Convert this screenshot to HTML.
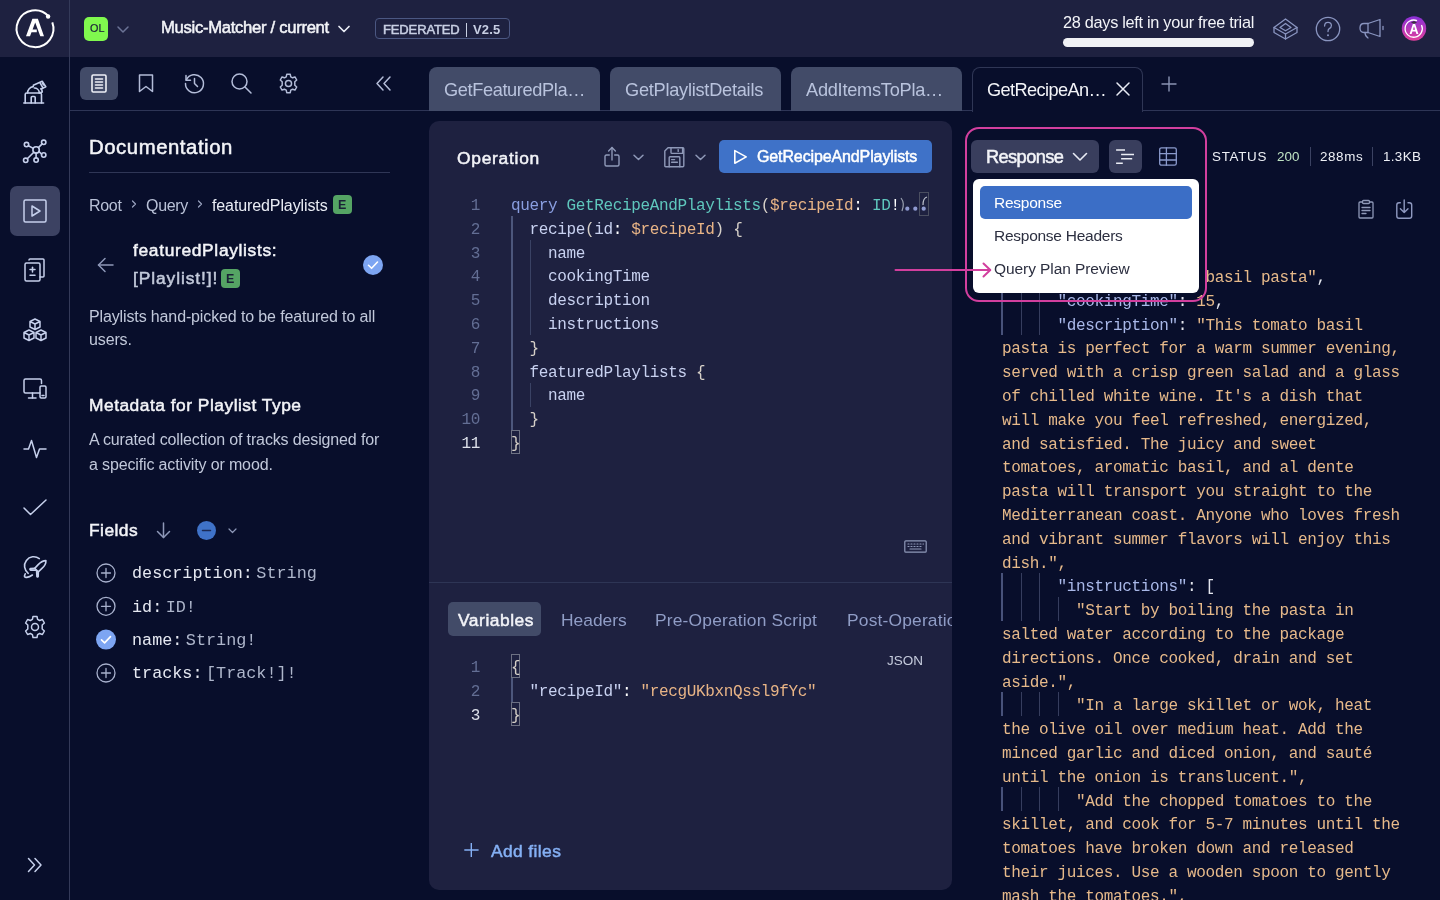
<!DOCTYPE html>
<html><head><meta charset="utf-8"><title>Explorer</title>
<style>
*{box-sizing:border-box;margin:0;padding:0}
html,body{width:1440px;height:900px;overflow:hidden;background:#080e2b;font-family:"Liberation Sans",sans-serif;color:#e8ebf4}
.a{position:absolute}
.t{position:absolute;white-space:nowrap;line-height:1;will-change:transform}
.m{position:absolute;white-space:pre;line-height:1;font-family:"Liberation Mono",monospace;will-change:transform}
svg{position:absolute;overflow:visible}
.sb{-webkit-text-stroke-width:0.5px}
.ic{fill:none;stroke:#bcc4de;stroke-width:1.5;stroke-linecap:round;stroke-linejoin:round}
</style></head><body>

<!-- HEADER -->
<div class="a" style="left:0;top:0;width:1440px;height:57px;background:#1e2140"></div>
<div class="a" style="left:69px;top:0;width:1px;height:900px;background:#343a59"></div>

<!-- apollo logo -->
<svg style="left:0;top:0" width="70" height="57">
  <path d="M52.3 22.4 A18.4 18.4 0 1 1 48.5 16.2" fill="none" stroke="#fff" stroke-width="2"/>
  <circle cx="48.1" cy="16.5" r="2.2" fill="#fff"/>
  <path d="M26 36.2 L32.4 18.8 L37.9 18.8 L44 36.2 L40.3 36.2 L35.2 22.4 L32.6 29.4 L36.8 29.4 L36.8 32.2 L31.5 32.2 L30 36.2 Z" fill="#fff"/>
</svg>

<div class="a" style="left:84px;top:16.5px;width:24px;height:24px;background:#80f94e;border-radius:5px"></div>
<div class="t sb" style="left:89.6px;top:23.2px;font-size:10.8px;color:#1a1f3a;letter-spacing:0.1px;-webkit-text-stroke-width:0.2px">OL</div>
<svg style="left:117px;top:25.5px" width="14" height="8"><path d="M1 1 L6 6 L11 1" class="ic" style="stroke:#6b7396"/></svg>

<div class="t sb" style="left:161px;top:20px;font-size:16.7px;letter-spacing:-0.32px;color:#f3f4f8">Music-Matcher / current</div>
<svg style="left:338px;top:25px" width="14" height="9"><path d="M1 1.5 L6 6.5 L11 1.5" class="ic" style="stroke:#e9ecf5;stroke-width:1.7"/></svg>

<div class="a" style="left:375px;top:18px;width:135px;height:21px;border:1px solid #4b5782;border-radius:4px"></div>
<div class="t sb" style="left:383.3px;top:22.6px;font-size:13px;letter-spacing:-0.13px;color:#c8cfe3">FEDERATED</div>
<div class="a" style="left:466px;top:23px;width:1px;height:14px;background:#c8cfe3"></div>
<div class="t" style="left:472.5px;top:22.6px;font-size:13px;font-weight:700;letter-spacing:0.2px;color:#c8cfe3">V2.5</div>

<div class="t" style="left:1063px;top:14.2px;font-size:16.3px;letter-spacing:-0.29px;color:#f3f4f8">28 days left in your free trial</div>
<div class="a" style="left:1063px;top:38px;width:191px;height:9px;background:#f0f1f5;border-radius:5px"></div>



<!-- header right icons -->
<svg style="left:1272px;top:17px" width="27" height="24" viewBox="0 0 27 24"><g class="ic" style="stroke:#8a95c0;stroke-width:1.3">
 <path d="M2 10.5 L13.5 2 L25 10.5 L13.5 17 Z"/><path d="M2 10.5 V15.5 L13.5 22 L25 15.5 V10.5"/><path d="M13.5 17 V22"/><path d="M8 10.5 L13.5 6.5 L19 10.5 L13.5 13.8 Z"/>
</g></svg>
<svg style="left:1315px;top:15.5px" width="26" height="26" viewBox="0 0 26 26"><g class="ic" style="stroke:#8a95c0;stroke-width:1.3">
 <circle cx="13" cy="13" r="11.7"/><path d="M9.6 10 Q9.6 6.3 13 6.3 Q16.4 6.3 16.4 9.5 Q16.4 11.5 14.3 12.6 Q13 13.3 13 15.5"/>
</g><circle cx="13" cy="19.3" r="1" fill="#8a95c0"/></svg>
<svg style="left:1358px;top:18px" width="27" height="21" viewBox="0 0 27 21"><g class="ic" style="stroke:#8a95c0;stroke-width:1.3">
 <path d="M10 5.5 L22 1.5 V18.5 L10 14.5 H6 Q2 14.5 2 10 Q2 5.5 6 5.5 Z"/><path d="M10 5.5 V14.5"/><path d="M7 14.5 Q7 18 10 20"/><path d="M25 8.5 V11.5"/>
</g></svg>
<svg style="left:1401px;top:16px" width="26" height="26" viewBox="0 0 26 26">
 <defs><linearGradient id="av" x1="0" y1="0" x2="0" y2="1"><stop offset="0" stop-color="#8a2fd8"/><stop offset="1" stop-color="#e0409c"/></linearGradient></defs>
 <circle cx="13" cy="12.5" r="12.2" fill="url(#av)"/>
 <path d="M20.5 9 A8.6 8.6 0 1 1 16 4.7" fill="none" stroke="#fff" stroke-width="1.3"/>
 <path d="M8.6 18 L12 7.5 L14 7.5 L17.4 18 L15.4 18 L14.6 15.4 L11.4 15.4 L10.6 18 Z M11.9 13.7 H14.1 L13 10.2 Z" fill="#fff"/>
 <path d="M10 6.5 L13 5 L16 6.5 L13 8 Z" fill="#3a3040"/>
</svg>

<!-- LEFT NAV -->
<div class="a" style="left:10px;top:186px;width:50px;height:50px;background:#3c4262;border-radius:7px"></div>
<svg style="left:23px;top:80px" width="24" height="24" viewBox="0 0 24 24"><g class="ic" style="stroke:#c6d0ec;stroke-width:1.6">
 <path d="M0.8 23 H20.6"/><path d="M2.2 23 V14.5 Q2.2 13 3.7 13 H17 Q18.5 13 18.5 14.5 V23"/><path d="M8.2 23 V17.5 Q8.2 16.5 9.2 16.5 H11.2 Q12.2 16.5 12.2 17.5 V23"/>
 <path d="M4.6 13 A6.3 6.3 0 0 1 10.3 6.6"/><path d="M16.2 13 L19.3 12 A6.3 6.3 0 0 0 18 8.6"/><path d="M11.3 8 A5 5 0 0 1 16.3 12.4"/>
 <path d="M10.3 5.2 L19.2 1.2 L22.8 6.8 L18 9"/><path d="M17 2.8 L20 7.9"/><path d="M19.4 3.2 L20.6 4.9"/>
</g></svg>
<svg style="left:23px;top:139px" width="24" height="24" viewBox="0 0 24 24"><g class="ic" style="stroke:#c6d0ec;stroke-width:1.6">
 <circle cx="13.1" cy="10.9" r="3.2"/><circle cx="3.5" cy="5.6" r="2.2"/><circle cx="20.7" cy="3.3" r="2.2"/><circle cx="20.7" cy="16" r="2.2"/><circle cx="2.7" cy="21.3" r="2.2"/><circle cx="13.1" cy="21.1" r="2.2"/>
 <path d="M5.4 6.7 L10.3 9.4"/><path d="M19.2 4.9 L15.4 8.6"/><path d="M18.6 15.1 L16 12.5"/><path d="M4.3 19.7 L10.8 13.2"/><path d="M13.1 14.1 V18.9"/>
</g></svg>
<svg style="left:23px;top:199px" width="24" height="24" viewBox="0 0 24 24"><g class="ic" style="stroke:#c6d0ec">
 <rect x="1" y="1" width="22" height="22" rx="1.5"/><path d="M9 7 L17 12 L9 17 Z"/>
</g></svg>
<svg style="left:23px;top:258px" width="24" height="24" viewBox="0 0 24 24"><g class="ic" style="stroke:#c6d0ec">
 <rect x="2" y="5" width="15" height="18" rx="1.5"/><path d="M6 2 Q6 1 7 1 H20 Q21 1 21 2 V18 Q21 19 20 19 H17"/><path d="M9.5 9.2 V14"/><path d="M7 11.6 H12"/><path d="M7 17.2 H12"/>
</g></svg>
<svg style="left:23px;top:318px" width="24" height="24" viewBox="0 0 24 24"><g class="ic" style="stroke:#c6d0ec">
 <path d="M12 1 L17 3.5 V9 L12 11.5 L7 9 V3.5 Z M7 3.5 L12 6 L17 3.5 M12 6 V11.5"/>
 <path d="M6 12 L11 14.5 V20 L6 22.5 L1 20 V14.5 Z M1 14.5 L6 17 L11 14.5 M6 17 V22.5"/>
 <path d="M18 12 L23 14.5 V20 L18 22.5 L13 20 V14.5 Z M13 14.5 L18 17 L23 14.5 M18 17 V22.5"/>
</g></svg>
<svg style="left:23px;top:377px" width="24" height="24" viewBox="0 0 24 24"><g class="ic" style="stroke:#c6d0ec">
 <path d="M17 16 H2.5 Q1 16 1 14.5 V3.5 Q1 2 2.5 2 H17 Q18.5 2 18.5 3.5 V6.5"/><path d="M9.5 16 V21"/><path d="M5.5 21 H13"/><rect x="17" y="9" width="6" height="12" rx="1.2"/><path d="M19 18.5 H21"/>
</g></svg>
<svg style="left:23px;top:437px" width="24" height="24" viewBox="0 0 24 24"><g class="ic" style="stroke:#c6d0ec">
 <path d="M1 12 H5.5 L8.5 3.5 L13.5 20.5 L16.5 12 H23"/>
</g></svg>
<svg style="left:23px;top:496px" width="24" height="24" viewBox="0 0 24 24"><g class="ic" style="stroke:#c6d0ec">
 <path d="M1 12 L7.5 18.5 L23 4"/>
</g></svg>
<svg style="left:23px;top:556px" width="24" height="24" viewBox="0 0 24 24"><g class="ic" style="stroke:#c6d0ec;stroke-width:1.6">
 <path d="M16.3 2.6 A8.3 8.3 0 0 0 5.2 17.3"/><path d="M2.2 17.8 Q0.3 21.7 3.8 21.4 Q6.5 21 9.4 19"/>
 <path d="M22.9 4.6 Q19 4.6 15.2 8.6 L11.7 12.4 L15.3 15.9 L19.2 12.2 Q23.2 8.4 22.9 4.6 Z"/>
 <path d="M11.7 12.4 L7.6 12.6 Q6.3 13.2 7.5 14.1 L12.8 14.2"/><path d="M15.3 15.9 L15.2 20.4 Q14.8 21.6 13.9 20.4 L13.6 15.3"/>
</g></svg>
<svg style="left:23px;top:615px" width="24" height="24" viewBox="0 0 24 24"><g class="ic" style="stroke:#c6d0ec">
 <circle cx="12" cy="12" r="3.5"/>
 <path d="M10 1.5 H14 L14.6 4.4 L16.6 5.5 L19.4 4.5 L21.4 8 L19.2 10 V14 L21.4 16 L19.4 19.5 L16.6 18.5 L14.6 19.6 L14 22.5 H10 L9.4 19.6 L7.4 18.5 L4.6 19.5 L2.6 16 L4.8 14 V10 L2.6 8 L4.6 4.5 L7.4 5.5 L9.4 4.4 Z"/>
</g></svg>
<svg style="left:27px;top:857px" width="16" height="16" viewBox="0 0 16 16"><g class="ic" style="stroke:#c6d0ec">
 <path d="M1.5 1.5 L7.5 8 L1.5 14.5"/><path d="M8 1.5 L14 8 L8 14.5"/>
</g></svg>

<!-- DOCS TOOLBAR -->
<div class="a" style="left:70px;top:110px;width:1370px;height:1px;background:#2e3556"></div>
<div class="a" style="left:80px;top:67px;width:38px;height:33px;background:#424b68;border-radius:6px"></div>
<svg style="left:91px;top:74px" width="16" height="19" viewBox="0 0 16 19"><g class="ic" style="stroke:#eef0f6;stroke-width:1.6">
 <rect x="1" y="1" width="14" height="17" rx="1.2"/><path d="M4.5 5 H11.5 M4.5 8 H11.5 M4.5 11 H11.5 M4.5 14 H11.5"/>
</g></svg>
<svg style="left:138px;top:74px" width="16" height="19" viewBox="0 0 16 19"><g class="ic" style="stroke:#b3bcd8">
 <path d="M1.5 1 H14.5 V17.5 L8 12.5 L1.5 17.5 Z"/>
</g></svg>
<svg style="left:184px;top:73px" width="21" height="21" viewBox="0 0 21 21"><g class="ic" style="stroke:#b3bcd8">
 <path d="M2.3 7 A9 9 0 1 1 1.5 10.5"/><path d="M2 2.5 V7.2 H6.5"/><path d="M10.5 5.5 V10.5 L13.5 13.5"/>
</g></svg>
<svg style="left:231px;top:73px" width="21" height="21" viewBox="0 0 21 21"><g class="ic" style="stroke:#b3bcd8">
 <circle cx="8.5" cy="8.5" r="7.5"/><path d="M14 14 L20 20"/>
</g></svg>
<svg style="left:278px;top:73px" width="21" height="21" viewBox="0 0 24 24"><g class="ic" style="stroke:#b3bcd8;stroke-width:1.7">
 <circle cx="12" cy="12" r="3.5"/>
 <path d="M10 1.5 H14 L14.6 4.4 L16.6 5.5 L19.4 4.5 L21.4 8 L19.2 10 V14 L21.4 16 L19.4 19.5 L16.6 18.5 L14.6 19.6 L14 22.5 H10 L9.4 19.6 L7.4 18.5 L4.6 19.5 L2.6 16 L4.8 14 V10 L2.6 8 L4.6 4.5 L7.4 5.5 L9.4 4.4 Z"/>
</g></svg>
<svg style="left:376px;top:76px" width="15" height="15" viewBox="0 0 15 15"><g class="ic" style="stroke:#b3bcd8">
 <path d="M7 1 L1 7.5 L7 14"/><path d="M14 1 L8 7.5 L14 14"/>
</g></svg>

<!-- DOCS CONTENT -->
<div class="t sb" style="left:89px;top:136.8px;font-size:20.35px;letter-spacing:0.54px;color:#f3f4f8">Documentation</div>
<div class="a" style="left:89px;top:172px;width:301px;height:1px;background:#2f3656"></div>

<div class="t" style="left:89px;top:197.8px;font-size:16px;color:#b9c1d7;letter-spacing:-0.3px">Root</div>
<svg style="left:131px;top:200px" width="6" height="8"><path d="M1.5 1 L4.5 4 L1.5 7" class="ic" style="stroke:#9aa3c0;stroke-width:1.2"/></svg>
<div class="t" style="left:146px;top:197.8px;font-size:16px;color:#b9c1d7;letter-spacing:-0.3px">Query</div>
<svg style="left:197px;top:200px" width="6" height="8"><path d="M1.5 1 L4.5 4 L1.5 7" class="ic" style="stroke:#9aa3c0;stroke-width:1.2"/></svg>
<div class="t" style="left:212px;top:197.8px;font-size:16px;color:#e9ecf4;letter-spacing:-0.11px">featuredPlaylists</div>
<div class="a" style="left:333px;top:195px;width:19px;height:19px;background:#55a464;border-radius:4px"></div>
<div class="t" style="left:337.5px;top:199px;font-size:12.5px;font-weight:700;color:#1a2036">E</div>

<svg style="left:97px;top:257px" width="17" height="16" viewBox="0 0 17 16"><g class="ic" style="stroke:#8e98b8">
 <path d="M16 8 H1.5"/><path d="M8 1.5 L1.5 8 L8 14.5"/>
</g></svg>
<div class="t sb" style="left:132.5px;top:242.1px;font-size:17.4px;color:#f3f4f8;letter-spacing:0.66px">featuredPlaylists:</div>
<div class="t sb" style="left:132.5px;top:270.1px;font-size:17.4px;color:#c3cadb;letter-spacing:0.91px">[Playlist!]!</div>
<div class="a" style="left:221px;top:268.5px;width:19px;height:19px;background:#55a464;border-radius:4px"></div>
<div class="t" style="left:225.5px;top:272.5px;font-size:12.5px;font-weight:700;color:#1a2036">E</div>
<svg style="left:363px;top:255px" width="20" height="20" viewBox="0 0 20 20">
 <circle cx="10" cy="10" r="10" fill="#7da5f2"/><path d="M5.5 10.3 L8.6 13.3 L14.5 7" fill="none" stroke="#fff" stroke-width="1.6" stroke-linecap="round" stroke-linejoin="round"/>
</svg>

<div class="t" style="left:89px;top:309.0px;font-size:16px;color:#c1c8da;letter-spacing:-0.13px">Playlists hand-picked to be featured to all</div>
<div class="t" style="left:89px;top:332.4px;font-size:16px;color:#c1c8da;letter-spacing:-0.13px">users.</div>

<div class="t sb" style="left:89px;top:397px;font-size:17.4px;color:#f3f4f8;letter-spacing:0.49px">Metadata for Playlist Type</div>
<div class="t" style="left:89px;top:432.3px;font-size:16px;color:#c1c8da;letter-spacing:-0.14px">A curated collection of tracks designed for</div>
<div class="t" style="left:89px;top:456.8px;font-size:16px;color:#c1c8da;letter-spacing:-0.14px">a specific activity or mood.</div>

<div class="t sb" style="left:89px;top:522px;font-size:17.4px;color:#f3f4f8;letter-spacing:0.45px">Fields</div>
<svg style="left:156px;top:522px" width="15" height="17" viewBox="0 0 15 17"><g class="ic" style="stroke:#8e98b8">
 <path d="M7.5 1 V15.5"/><path d="M1.5 9.5 L7.5 15.5 L13.5 9.5"/>
</g></svg>
<svg style="left:197px;top:521px" width="19" height="19" viewBox="0 0 19 19">
 <circle cx="9.5" cy="9.5" r="9.5" fill="#3f72c8"/><path d="M5.5 9.5 H13.5" stroke="#1b2a55" stroke-width="1.5" stroke-linecap="round"/>
</svg>
<svg style="left:228px;top:528px" width="9" height="6" viewBox="0 0 9 6"><path d="M1 1 L4.5 4.5 L8 1" class="ic" style="stroke:#8e98b8;stroke-width:1.2"/></svg>

<svg style="left:95.5px;top:563px" width="20" height="120" viewBox="0 0 20 120"><g class="ic" style="stroke:#a8b1cd;stroke-width:1.3">
 <circle cx="10" cy="10" r="9"/><path d="M10 5.5 V14.5 M5.5 10 H14.5"/>
 <circle cx="10" cy="43.3" r="9"/><path d="M10 38.8 V47.8 M5.5 43.3 H14.5"/>
 <circle cx="10" cy="110" r="9"/><path d="M10 105.5 V114.5 M5.5 110 H14.5"/>
</g>
 <circle cx="10" cy="76.6" r="10" fill="#7da5f2"/><path d="M5.5 76.9 L8.6 79.9 L14.5 73.6" fill="none" stroke="#fff" stroke-width="1.6" stroke-linecap="round" stroke-linejoin="round"/>
</svg>
<div class="m" style="left:132px;top:566.2px;font-size:16.8px;color:#e6e9f2">description:<span style="color:#aeb6cb;margin-left:3.5px">String</span></div>
<div class="m" style="left:132px;top:599.5px;font-size:16.8px;color:#e6e9f2">id:<span style="color:#aeb6cb;margin-left:3.5px">ID!</span></div>
<div class="m" style="left:132px;top:632.8px;font-size:16.8px;color:#e6e9f2">name:<span style="color:#aeb6cb;margin-left:3.5px">String!</span></div>
<div class="m" style="left:132px;top:666.1px;font-size:16.8px;color:#e6e9f2">tracks:<span style="color:#aeb6cb;margin-left:3.5px">[Track!]!</span></div>

<!-- TABS -->
<div class="a" style="left:429px;top:67px;width:171px;height:44px;background:#424b68;border-radius:8px 8px 0 0"></div>
<div class="a" style="left:610px;top:67px;width:171px;height:44px;background:#424b68;border-radius:8px 8px 0 0"></div>
<div class="a" style="left:791px;top:67px;width:171px;height:44px;background:#424b68;border-radius:8px 8px 0 0"></div>
<div class="a" style="left:972px;top:67px;width:171px;height:45px;background:#080e2b;border:1px solid #2f3655;border-bottom:none;border-radius:8px 8px 0 0"></div>
<div class="t" style="left:444px;top:81.3px;font-size:18.2px;color:#b9c3dd;letter-spacing:-0.37px">GetFeaturedPla…</div>
<div class="t" style="left:625px;top:81.3px;font-size:18.2px;color:#b9c3dd;letter-spacing:-0.25px">GetPlaylistDetails</div>
<div class="t" style="left:806px;top:81.3px;font-size:18.2px;color:#b9c3dd;letter-spacing:-0.25px">AddItemsToPla…</div>
<div class="t" style="left:987px;top:81.3px;font-size:18.2px;color:#f3f4f8;letter-spacing:-0.6px">GetRecipeAn…</div>
<svg style="left:1116px;top:82px" width="14" height="14" viewBox="0 0 14 14"><path d="M1 1 L13 13 M13 1 L1 13" class="ic" style="stroke:#e8ebf4;stroke-width:1.5"/></svg>
<svg style="left:1161px;top:76px" width="16" height="16" viewBox="0 0 16 16"><path d="M8 1 V15 M1 8 H15" class="ic" style="stroke:#8a94b4;stroke-width:1.4"/></svg>

<!-- EDITOR PANEL -->
<div class="a" style="left:429px;top:121px;width:523px;height:769px;background:#1e2140;border-radius:10px"></div>
<div class="t sb" style="left:457px;top:150px;font-size:17.4px;color:#f3f4f8;letter-spacing:0.74px">Operation</div>
<svg style="left:604px;top:146px" width="16" height="21" viewBox="0 0 16 21"><g class="ic" style="stroke:#8f99b8;stroke-width:1.4">
 <path d="M8 1.5 V14"/><path d="M4.6 4.9 L8 1.5 L11.4 4.9"/><path d="M5.3 9 H2.5 Q1 9 1 10.5 V18.5 Q1 20 2.5 20 H13.5 Q15 20 15 18.5 V10.5 Q15 9 13.5 9 H10.7"/>
</g></svg>
<svg style="left:633px;top:153.5px" width="11" height="7" viewBox="0 0 11 7"><path d="M1 1.2 L5.5 5.5 L10 1.2" class="ic" style="stroke:#8f99b8;stroke-width:1.5"/></svg>
<svg style="left:663.5px;top:146.5px" width="21" height="21" viewBox="0 0 21 21"><g class="ic" style="stroke:#8f99b8;stroke-width:1.4">
 <path d="M4 0.8 H18.8 Q19.8 0.8 19.8 1.8 V18.8 Q19.8 19.8 18.8 19.8 H1.8 Q0.8 19.8 0.8 18.8 V4 Z"/><path d="M7 0.8 V5.4 Q7 6.4 8 6.4 H18.6 V0.8"/><path d="M14.2 2.6 V4.4"/>
 <path d="M5.2 19.8 V10.6 Q5.2 9.8 6 9.8 H15 Q15.8 9.8 15.8 10.6 V19.8"/><path d="M7.6 12.6 H10.6 M7.6 15.3 H13.4"/>
</g></svg>
<svg style="left:695px;top:153.5px" width="11" height="7" viewBox="0 0 11 7"><path d="M1 1.2 L5.5 5.5 L10 1.2" class="ic" style="stroke:#8f99b8;stroke-width:1.5"/></svg>
<div class="a" style="left:719px;top:140px;width:213px;height:33px;background:#3f72c8;border-radius:5px"></div>
<svg style="left:733px;top:149px" width="16" height="16" viewBox="0 0 16 16"><path d="M1.8 1.6 L13.2 7.9 L1.8 14.2 Z" class="ic" style="stroke:#fff;stroke-width:1.6"/></svg>
<div class="t sb" style="left:757px;top:149.3px;font-size:16px;color:#fff;letter-spacing:-0.12px">GetRecipeAndPlaylists</div>

<!-- code -->
<div class="a" style="left:511px;top:216px;width:1.5px;height:214px;background:#4d577c"></div>
<div class="a" style="left:529.5px;top:240px;width:1px;height:95px;background:#3a4264"></div>
<div class="a" style="left:529.5px;top:383px;width:1px;height:24px;background:#3a4264"></div>
<div class="a" style="left:510.5px;top:430px;width:9.5px;height:24px;border:1px solid #6d7183"></div>
<div class="a" style="left:919px;top:192px;width:10px;height:24px;border:1px solid #4a4e60"></div>
<div class="m" id="ln" style="left:455px;top:194.9px;width:25px;text-align:right;font-size:16px;letter-spacing:-0.35px;line-height:23.8px;color:#636e94">1
2
3
4
5
6
7
8
9
10
<span style="color:#dde0ea">11</span></div>
<div class="m" style="left:511px;top:194.9px;font-size:16px;letter-spacing:-0.35px;line-height:23.8px;color:#c8d1f0"><span style="color:#8a9ee0">query</span> <span style="color:#5fc7bd">GetRecipeAndPlaylists</span><span style="color:#d6d0c8">(</span><span style="color:#e8b486">$recipeId</span><span style="color:#fff">:</span> <span style="color:#5fc7bd">ID</span><span style="color:#fff">!</span><span style="color:#d6d0c8">)</span>
  recipe<span style="color:#d6d0c8">(</span>id<span style="color:#fff">:</span> <span style="color:#e8b486">$recipeId</span><span style="color:#d6d0c8">)</span> <span style="color:#d6d0c8">{</span>
    name
    cookingTime
    description
    instructions
  <span style="color:#d6d0c8">}</span>
  featuredPlaylists <span style="color:#d6d0c8">{</span>
    name
  <span style="color:#d6d0c8">}</span>
<span style="color:#d6d0c8">}</span></div>
<div class="a" style="left:897px;top:192px;width:32px;height:22px;background:#1e2140"></div>
<svg style="left:900px;top:195px" width="30" height="18" viewBox="0 0 30 18"><g>
 <path d="M1 3 Q5 8 2 16" fill="none" stroke="#9aa0b0" stroke-width="1.2"/>
 <circle cx="7.3" cy="13.7" r="2.1" fill="#8f9ad0"/><circle cx="15.3" cy="13.7" r="2.1" fill="#8f9ad0"/><circle cx="23.7" cy="13.7" r="2.1" fill="#8f9ad0"/>
 <path d="M27 2 Q23 3 23 10" fill="none" stroke="#c0c4d0" stroke-width="1.2"/>
</g></svg>
<div class="a" style="left:919px;top:192px;width:10px;height:24px;border:1px solid #4a4e60"></div>

<svg style="left:904px;top:540px" width="23" height="13" viewBox="0 0 23 13"><g class="ic" style="stroke:#8f99b8;stroke-width:1.2">
 <rect x="0.8" y="0.8" width="21.4" height="11.4" rx="1"/><path d="M4 4 H5 M7 4 H8 M10 4 H11 M13 4 H14 M16 4 H17 M19 4 H19.5 M4 6.5 H5 M7 6.5 H8 M10 6.5 H11 M13 6.5 H14 M16 6.5 H17 M6 9 H17"/>
</g></svg>
<div class="a" style="left:429px;top:582px;width:523px;height:1px;background:#2e3555"></div>

<!-- variables tabs -->
<div class="a" style="left:448px;top:602px;width:93px;height:34px;background:#424b68;border-radius:5px"></div>
<div class="t sb" style="left:457.5px;top:612.1px;font-size:17.4px;color:#f3f4f8;letter-spacing:0.54px">Variables</div>
<div class="t" style="left:561px;top:612.1px;font-size:17.4px;color:#909dc6;letter-spacing:0px">Headers</div>
<div class="t" style="left:655px;top:612.1px;font-size:17.4px;color:#909dc6;letter-spacing:0.18px">Pre-Operation Script</div>
<div class="a" style="left:847px;top:600px;width:105px;height:40px;overflow:hidden"><div class="t" style="left:0;top:12.1px;font-size:17.4px;color:#909dc6;letter-spacing:0.18px">Post-Operation Script</div></div>
<div class="t" style="left:886.5px;top:653.5px;font-size:13.5px;color:#c5cbdc;letter-spacing:0px">JSON</div>

<div class="a" style="left:511px;top:678px;width:1.5px;height:24px;background:#4d577c"></div>
<div class="a" style="left:510.5px;top:654px;width:9.5px;height:24px;border:1px solid #6d7183"></div>
<div class="a" style="left:510.5px;top:702px;width:9.5px;height:24px;border:1px solid #6d7183"></div>
<div class="m" style="left:455px;top:657.4px;width:25px;text-align:right;font-size:16px;letter-spacing:-0.35px;line-height:23.8px;color:#636e94">1
2
<span style="color:#dde0ea">3</span></div>
<div class="m" style="left:511px;top:657.4px;font-size:16px;letter-spacing:-0.35px;line-height:23.8px;color:#d6d0c8">{
  <span style="color:#c8d1f0">"recipeId"</span><span style="color:#fff">:</span> <span style="color:#e8b486">"recgUKbxnQssl9fYc"</span>
}</div>

<svg style="left:464px;top:843px" width="15" height="14" viewBox="0 0 15 14"><path d="M7.3 0 V14 M0.3 7 H14.6" fill="none" style="stroke:#85b0f4;stroke-width:1.4"/></svg>
<div class="t sb" style="left:491px;top:843.1px;font-size:17.4px;color:#85b0f4;letter-spacing:0.39px">Add files</div>

<!-- RESPONSE -->
<div class="a" style="left:1001.2px;top:263.6px;width:1.8px;height:24px;background:#48527a"></div>
<div class="a" style="left:1020.5px;top:263.6px;width:1px;height:24px;background:#363d5e"></div>
<div class="a" style="left:1039.0px;top:263.6px;width:1px;height:24px;background:#363d5e"></div>
<div class="a" style="left:1001.2px;top:287.4px;width:1.8px;height:24px;background:#48527a"></div>
<div class="a" style="left:1020.5px;top:287.4px;width:1px;height:24px;background:#363d5e"></div>
<div class="a" style="left:1039.0px;top:287.4px;width:1px;height:24px;background:#363d5e"></div>
<div class="a" style="left:1001.2px;top:311.2px;width:1.8px;height:24px;background:#48527a"></div>
<div class="a" style="left:1020.5px;top:311.2px;width:1px;height:24px;background:#363d5e"></div>
<div class="a" style="left:1039.0px;top:311.2px;width:1px;height:24px;background:#363d5e"></div>
<div class="a" style="left:1001.2px;top:573.0px;width:1.8px;height:24px;background:#48527a"></div>
<div class="a" style="left:1020.5px;top:573.0px;width:1px;height:24px;background:#363d5e"></div>
<div class="a" style="left:1039.0px;top:573.0px;width:1px;height:24px;background:#363d5e"></div>
<div class="a" style="left:1001.2px;top:596.8px;width:1.8px;height:24px;background:#48527a"></div>
<div class="a" style="left:1020.5px;top:596.8px;width:1px;height:24px;background:#363d5e"></div>
<div class="a" style="left:1039.0px;top:596.8px;width:1px;height:24px;background:#363d5e"></div>
<div class="a" style="left:1057.5px;top:596.8px;width:1px;height:24px;background:#363d5e"></div>
<div class="a" style="left:1001.2px;top:692.0px;width:1.8px;height:24px;background:#48527a"></div>
<div class="a" style="left:1020.5px;top:692.0px;width:1px;height:24px;background:#363d5e"></div>
<div class="a" style="left:1039.0px;top:692.0px;width:1px;height:24px;background:#363d5e"></div>
<div class="a" style="left:1057.5px;top:692.0px;width:1px;height:24px;background:#363d5e"></div>
<div class="a" style="left:1001.2px;top:787.2px;width:1.8px;height:24px;background:#48527a"></div>
<div class="a" style="left:1020.5px;top:787.2px;width:1px;height:24px;background:#363d5e"></div>
<div class="a" style="left:1039.0px;top:787.2px;width:1px;height:24px;background:#363d5e"></div>
<div class="a" style="left:1057.5px;top:787.2px;width:1px;height:24px;background:#363d5e"></div>
<div class="m" style="left:1002px;top:266.5px;font-size:16px;letter-spacing:-0.35px;line-height:23.8px;color:#e6b98a">      <span style="color:#a9b8e8">"name"</span><span style="color:#e4e6ee">:</span> <span style="color:#e6b98a">"Tomato basil pasta"</span><span style="color:#e4e6ee">,</span>
      <span style="color:#a9b8e8">"cookingTime"</span><span style="color:#e4e6ee">:</span> <span style="color:#e6b98a">15</span><span style="color:#e4e6ee">,</span>
      <span style="color:#a9b8e8">"description"</span><span style="color:#e4e6ee">:</span> <span style="color:#e6b98a">"This tomato basil</span>
<span style="color:#e6b98a">pasta is perfect for a warm summer evening,</span>
<span style="color:#e6b98a">served with a crisp green salad and a glass</span>
<span style="color:#e6b98a">of chilled white wine. It's a dish that</span>
<span style="color:#e6b98a">will make you feel refreshed, energized,</span>
<span style="color:#e6b98a">and satisfied. The juicy and sweet</span>
<span style="color:#e6b98a">tomatoes, aromatic basil, and al dente</span>
<span style="color:#e6b98a">pasta will transport you straight to the</span>
<span style="color:#e6b98a">Mediterranean coast. Anyone who loves fresh</span>
<span style="color:#e6b98a">and vibrant summer flavors will enjoy this</span>
<span style="color:#e6b98a">dish.",</span>
      <span style="color:#a9b8e8">"instructions"</span><span style="color:#e4e6ee">: [</span>
        <span style="color:#e6b98a">"Start by boiling the pasta in</span>
<span style="color:#e6b98a">salted water according to the package</span>
<span style="color:#e6b98a">directions. Once cooked, drain and set</span>
<span style="color:#e6b98a">aside.",</span>
        <span style="color:#e6b98a">"In a large skillet or wok, heat</span>
<span style="color:#e6b98a">the olive oil over medium heat. Add the</span>
<span style="color:#e6b98a">minced garlic and diced onion, and sauté</span>
<span style="color:#e6b98a">until the onion is translucent.",</span>
        <span style="color:#e6b98a">"Add the chopped tomatoes to the</span>
<span style="color:#e6b98a">skillet, and cook for 5-7 minutes until the</span>
<span style="color:#e6b98a">tomatoes have broken down and released</span>
<span style="color:#e6b98a">their juices. Use a wooden spoon to gently</span>
<span style="color:#e6b98a">mash the tomatoes.",</span>
</div>
<div class="t" style="left:1212px;top:150.4px;font-size:13.4px;color:#eef0f6;letter-spacing:0.7px">STATUS</div>
<div class="t" style="left:1276.5px;top:150.4px;font-size:13.4px;color:#bfe3c3;letter-spacing:0.1px">200</div>
<div class="a" style="left:1310px;top:147px;width:1px;height:19px;background:#3b4262"></div>
<div class="t" style="left:1320px;top:150.4px;font-size:13.4px;color:#eef0f6;letter-spacing:0.6px">288ms</div>
<div class="a" style="left:1372px;top:147px;width:1px;height:19px;background:#3b4262"></div>
<div class="t" style="left:1382.5px;top:150.4px;font-size:13.4px;color:#eef0f6;letter-spacing:0.35px">1.3KB</div>
<svg style="left:1358px;top:199px" width="16" height="20" viewBox="0 0 16 20"><g class="ic" style="stroke:#8f99b8;stroke-width:1.3">
 <path d="M4.5 3 H2 Q1 3 1 4 V18 Q1 19 2 19 H14 Q15 19 15 18 V4 Q15 3 14 3 H11.5"/><rect x="4.5" y="1.5" width="7" height="3" rx="1"/><path d="M4 8.5 H12 M4 11.5 H12 M4 14.5 H8"/>
</g></svg>
<svg style="left:1395px;top:201px" width="18" height="18" viewBox="0 0 18 18"><g class="ic" style="stroke:#8f99c0;stroke-width:1.4">
 <path d="M5.3 1.8 H4 Q1.8 1.8 1.8 4 V15 Q1.8 17.3 4 17.3 H14.4 Q16.7 17.3 16.7 15 V4 Q16.7 1.8 14.4 1.8 H13"/><path d="M9.2 -1 V11.5 M5.4 7.7 L9.2 11.5 L13 7.7"/>
</g></svg>

<!-- response toolbar -->
<div class="a" style="left:971px;top:140px;width:128px;height:33px;background:#393e5d;border-radius:6px"></div>
<div class="t sb" style="left:985.5px;top:147.9px;font-size:18.2px;color:#f3f4f8;letter-spacing:-0.58px">Response</div>
<svg style="left:1072px;top:152px" width="16" height="10" viewBox="0 0 16 10"><path d="M1.5 1.5 L8 8 L14.5 1.5" class="ic" style="stroke:#e8ebf4;stroke-width:1.6"/></svg>
<div class="a" style="left:1109px;top:140px;width:33px;height:33px;background:#393e5d;border-radius:6px"></div>
<svg style="left:1109px;top:140px" width="33" height="33" viewBox="0 0 33 33"><g fill="none" stroke="#eceef5" stroke-width="1.5">
 <path d="M7.1 10 H16 M12.1 14.5 H25 M12.1 18.8 H23.2 M7.1 23.3 H13.8"/>
</g></svg>
<svg style="left:1159px;top:147px" width="18" height="19" viewBox="0 0 18 19"><g class="ic" style="stroke:#8a9acc;stroke-width:1.3">
 <rect x="0.7" y="0.8" width="16.6" height="17.4" rx="1.8"/><path d="M0.7 6.6 H17.3 M0.7 13 H17.3 M7.4 0.8 V18.2"/>
</g></svg>

<!-- dropdown menu -->
<div class="a" style="left:973px;top:178.5px;width:226px;height:114px;background:#fff;border-radius:6px"></div>
<div class="a" style="left:980px;top:186px;width:212px;height:33px;background:#3b6ec6;border-radius:5px"></div>
<div class="t" style="left:994px;top:195.1px;font-size:15.5px;color:#fff;letter-spacing:-0.25px">Response</div>
<div class="t" style="left:994px;top:228.3px;font-size:15.5px;color:#2c2f40;letter-spacing:-0.26px">Response Headers</div>
<div class="t" style="left:994px;top:261.4px;font-size:15.5px;color:#2c2f40;letter-spacing:-0.08px">Query Plan Preview</div>

<!-- annotation -->
<div class="a" style="left:965px;top:127px;width:242px;height:175px;border:2px solid #d23f9e;border-radius:14px"></div>
<svg style="left:890px;top:258px" width="110" height="24" viewBox="0 0 110 24"><g fill="none" stroke="#d23f9e" stroke-width="2" stroke-linecap="round" stroke-linejoin="round">
 <path d="M5.5 12 H100"/><path d="M93.5 5.5 L100.3 12 L93.5 18.5"/>
</g></svg>
</body></html>
